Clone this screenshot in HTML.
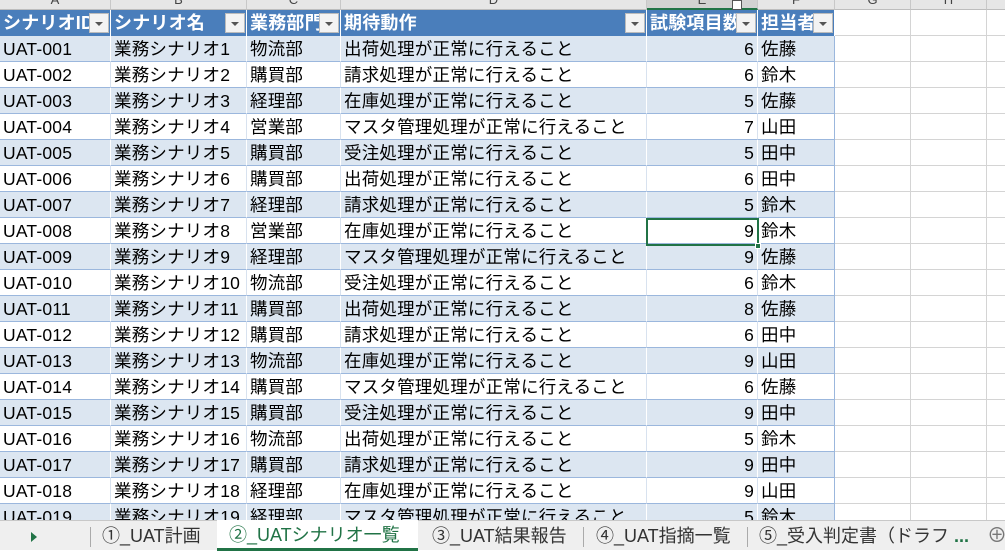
<!DOCTYPE html><html><head><meta charset="utf-8"><style>
*{margin:0;padding:0;box-sizing:border-box}
body{width:1005px;height:550px;overflow:hidden;background:#fff;font-family:"Liberation Sans","Noto Sans CJK JP",sans-serif;position:relative}
.colh{position:absolute;top:0;height:10px;background:#e6e6e6;border-right:1px solid #c8c8c8;border-bottom:1px solid #bdbdbd;overflow:hidden;font-size:13px;color:#444;text-align:center;line-height:0px}
.r{position:absolute;left:0;height:26px;width:1005px}
.c{position:absolute;top:0;height:26px;font-size:17.5px;line-height:27px;padding-left:3px;white-space:nowrap;overflow:hidden;color:#000;border-right:1px solid #fff;border-bottom:1px solid #9bb7dd;letter-spacing:0.2px}
.h .c{background:#4a7ebb;color:#fff;font-weight:bold;border-right:1px solid #fff;border-bottom:none;font-size:18px}
.b .c{background:#dce6f1}
.w .c{background:#fff;border-right:1px solid #d8e2ef}
.g{position:absolute;top:0;height:26px;border-right:1px solid #d4d4d4;border-bottom:1px solid #d4d4d4}
.num{text-align:right;padding-right:3px}
.fb{position:absolute;top:3px;width:20px;height:20px;background:#f3f3f3;border:1px solid #bbb}
.fb:after{content:"";position:absolute;left:5px;top:8px;border-left:4px solid transparent;border-right:4px solid transparent;border-top:4px solid #555}
.tabs{position:absolute;left:0;top:520px;width:1005px;height:30px;background:#efefef;border-top:1px solid #c8c8c8;font-size:18px;color:#333}
.t{position:absolute;top:0;height:30px;line-height:30px;white-space:nowrap}
.sep{position:absolute;top:6px;width:1px;height:20px;background:#aaa}
</style></head><body>
<div class="colh" style="left:0;width:111px">A</div>
<div class="colh" style="left:111px;width:136px">B</div>
<div class="colh" style="left:247px;width:94px">C</div>
<div class="colh" style="left:341px;width:306px">D</div>
<div class="colh" style="left:647px;width:111px;background:#d2d2d2;border-bottom:2px solid #217346">E</div>
<div class="colh" style="left:758px;width:77px">F</div>
<div class="colh" style="left:835px;width:76px">G</div>
<div class="colh" style="left:911px;width:76px">H</div>
<div class="colh" style="left:987px;width:30px"></div>
<div style="position:absolute;left:732px;top:0;width:10px;height:10px;background:#fff;border:1px solid #555"></div>

<div id="rows"></div>
<div class="r h" style="top:10px">
<div class="c" style="left:0;width:111px">シナリオID</div><div class="fb" style="left:89px"></div>
<div class="c" style="left:111px;width:136px">シナリオ名</div><div class="fb" style="left:225px"></div>
<div class="c" style="left:247px;width:94px">業務部門</div><div class="fb" style="left:319px"></div>
<div class="c" style="left:341px;width:306px">期待動作</div><div class="fb" style="left:625px"></div>
<div class="c" style="left:647px;width:111px">試験項目数</div><div class="fb" style="left:736px"></div>
<div class="c" style="left:758px;width:77px">担当者</div><div class="fb" style="left:813px"></div>
<div class="g" style="left:835px;width:76px;border-bottom:1px solid #d4d4d4"></div><div class="g" style="left:911px;width:76px"></div><div class="g" style="left:987px;width:30px"></div>
</div>
<script>
var d=[["物流部","出荷",6,"佐藤"],["購買部","請求",6,"鈴木"],["経理部","在庫",5,"佐藤"],["営業部","マスタ管理",7,"山田"],["購買部","受注",5,"田中"],["購買部","出荷",6,"田中"],["経理部","請求",5,"鈴木"],["営業部","在庫",9,"鈴木"],["経理部","マスタ管理",9,"佐藤"],["物流部","受注",6,"鈴木"],["購買部","出荷",8,"佐藤"],["購買部","請求",6,"田中"],["物流部","在庫",9,"山田"],["購買部","マスタ管理",6,"佐藤"],["購買部","受注",9,"田中"],["物流部","出荷",5,"鈴木"],["購買部","請求",9,"田中"],["経理部","在庫",9,"山田"],["経理部","マスタ管理",5,"鈴木"]];
var h="";
for(var i=0;i<d.length;i++){var n=i+1,id="UAT-"+("00"+n).slice(-3);var x=d[i];
var sp=x[1]=="マスタ管理"?"マスタ管理処理":x[1]+"処理";
h+='<div class="r '+(i%2?'w':'b')+'" style="top:'+(36+26*i)+'px">'+
'<div class="c" style="left:0;width:111px">'+id+'</div>'+
'<div class="c" style="left:111px;width:136px">業務シナリオ'+n+'</div>'+
'<div class="c" style="left:247px;width:94px">'+x[0]+'</div>'+
'<div class="c" style="left:341px;width:306px">'+sp+'が正常に行えること</div>'+
'<div class="c num" style="left:647px;width:111px">'+x[2]+'</div>'+
'<div class="c" style="left:758px;width:77px;border-right:1px solid #9bb7dd">'+x[3]+'</div>'+
'<div class="g" style="left:835px;width:76px"></div><div class="g" style="left:911px;width:76px"></div><div class="g" style="left:987px;width:30px"></div></div>';}
document.getElementById("rows").innerHTML=h;
</script>
<div style="position:absolute;left:646px;top:218px;width:113px;height:28px;border:2px solid #217346"></div>
<div style="position:absolute;left:755px;top:243px;width:6px;height:6px;background:#217346;border:1px solid #fff"></div>
<div class="tabs">
<div class="t" style="left:31px;top:0"><span style="display:inline-block;border-top:5px solid transparent;border-bottom:5px solid transparent;border-left:6px solid #217346;vertical-align:middle"></span></div>
<div class="sep" style="left:90px"></div>
<div class="t" style="left:102px">①_UAT計画</div>
<div class="t" style="left:217px;width:201px;background:#fff;color:#217346;top:-1px;height:31px;padding-left:12px;border-bottom:3px solid #217346">②_UATシナリオ一覧</div>
<div class="t" style="left:432px">③_UAT結果報告</div>
<div class="sep" style="left:583px"></div>
<div class="t" style="left:596px">④_UAT指摘一覧</div>
<div class="sep" style="left:747px"></div>
<div class="t" style="left:759px">⑤_受入判定書（ドラフ <span style="color:#217346;font-weight:bold">...</span></div>
<div class="t" style="left:987px;font-size:20px;color:#777">⊕</div>
</div>
</body></html>
